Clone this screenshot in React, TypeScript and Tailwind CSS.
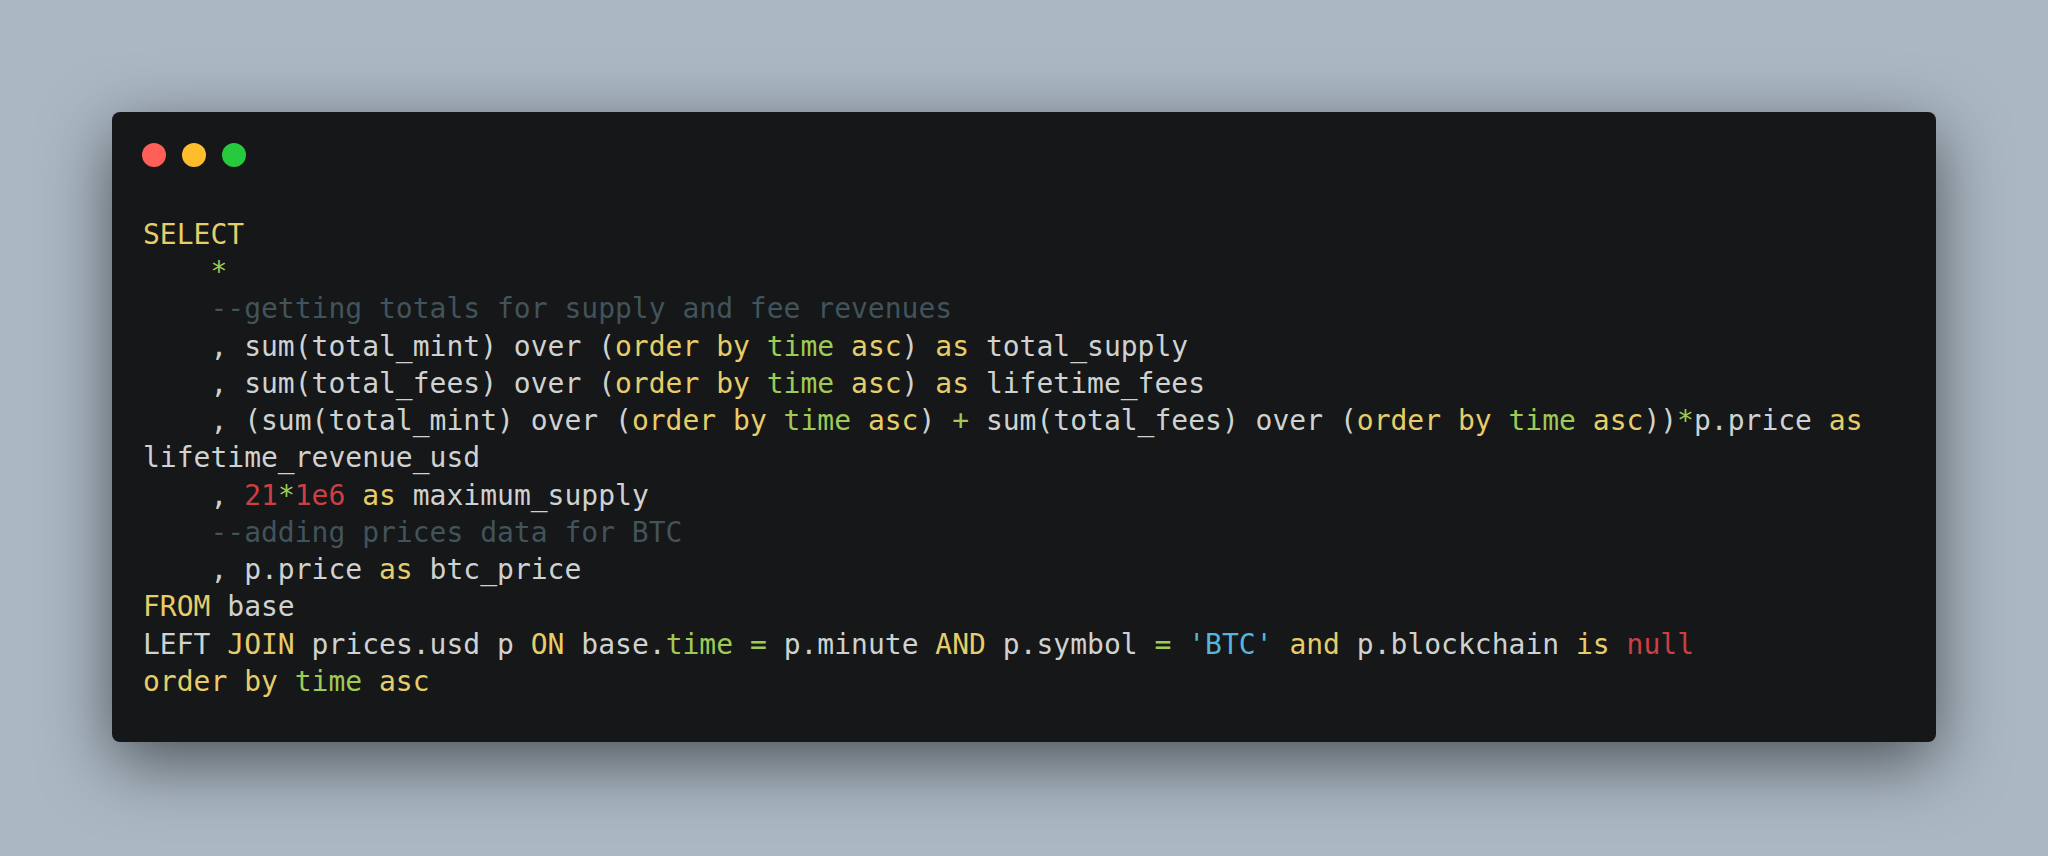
type Tok = [string, string?];

const K = "text-[#e6cd69]"; // keyword
const G = "text-[#9fca56]"; // builtin / operator
const N = "text-[#cd3f45]"; // number / null
const S = "text-[#55b5db]"; // string
const C = "text-[#41535b]"; // comment

const lines: Tok[][] = [
  [["SELECT", K]],
  [["    "], ["*", G]],
  [["    --getting totals for supply and fee revenues", C]],
  [["    , sum(total_mint) over ("], ["order by", K], [" "], ["time", G], [" "], ["asc", K], [") "], ["as", K], [" total_supply"]],
  [["    , sum(total_fees) over ("], ["order by", K], [" "], ["time", G], [" "], ["asc", K], [") "], ["as", K], [" lifetime_fees"]],
  [
    ["    , (sum(total_mint) over ("], ["order by", K], [" "], ["time", G], [" "], ["asc", K], [") "], ["+", G],
    [" sum(total_fees) over ("], ["order by", K], [" "], ["time", G], [" "], ["asc", K], ["))"], ["*", G],
    ["p.price "], ["as", K],
  ],
  [["lifetime_revenue_usd"]],
  [["    , "], ["21", N], ["*", G], ["1e6", N], [" "], ["as", K], [" maximum_supply"]],
  [["    --adding prices data for BTC", C]],
  [["    , p.price "], ["as", K], [" btc_price"]],
  [["FROM", K], [" base"]],
  [
    ["LEFT "], ["JOIN", K], [" prices.usd p "], ["ON", K], [" base."], ["time", G], [" "], ["=", G],
    [" p.minute "], ["AND", K], [" p.symbol "], ["=", G], [" "], ["'BTC'", S], [" "], ["and", K],
    [" p.blockchain "], ["is", K], [" "], ["null", N],
  ],
  [["order by", K], [" "], ["time", G], [" "], ["asc", K]],
];

export default function App() {
  return (
    <div className="min-h-[856px] w-full bg-[#abb8c3] px-[112px] pt-[112px]">
      <div className="rounded-[8px] bg-[#151718] pl-[30px] pr-[30px] pt-[31px] pb-[42px] shadow-[0_20px_68px_rgba(0,0,0,0.55)]">
        {/* window controls */}
        <div className="flex gap-[16px]">
          <span className="h-[24px] w-[24px] rounded-full bg-[#ff5f56]" />
          <span className="h-[24px] w-[24px] rounded-full bg-[#ffbd2e]" />
          <span className="h-[24px] w-[24px] rounded-full bg-[#27c93f]" />
        </div>

        <pre className="mt-[49px] pl-[1px] font-['DejaVu_Sans_Mono','Liberation_Mono',monospace] text-[28px] leading-[37.24px] text-[#cfd2d1]">
          {lines.map((line, i) => (
            <div key={i} className="whitespace-pre">
              {line.map(([t, cls], j) => (
                <span key={j} className={cls}>{t}</span>
              ))}
            </div>
          ))}
        </pre>
      </div>
    </div>
  );
}
